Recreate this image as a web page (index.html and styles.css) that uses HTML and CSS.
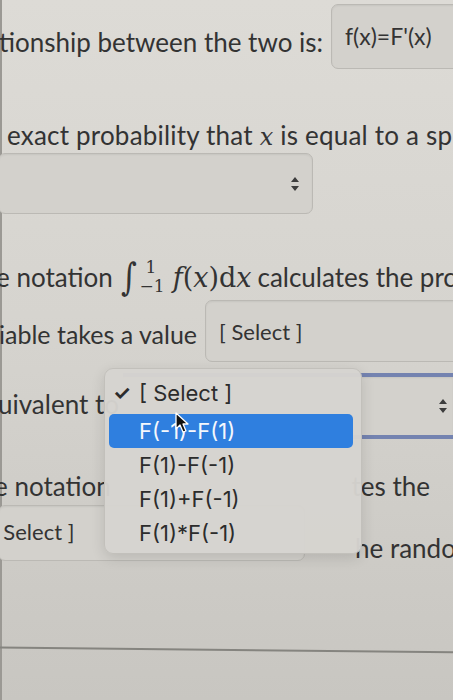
FILE: index.html
```html
<!DOCTYPE html>
<html lang="en">
  <head>
    <meta charset="UTF-8" />
    <meta name="viewport" content="width=device-width, initial-scale=1.0" />
    <title>Quiz</title>
    <link rel="stylesheet" href="styles.css">
  </head>
  <body>
    <div class="page">
      <div class="row row1">
        <span class="txt t1">tionship between the two is:</span>
        <div class="box box1"><span class="val">f(x)=F'(x)</span></div>
      </div>

      <div class="txt t2">exact probability that <i class="mx">x</i> is equal to a sp</div>
      <div class="box box2">
        <svg class="arrows" width="10" height="16" viewBox="0 0 10 16"><path d="M5 1 L9 6 L1 6 Z M1 10 L9 10 L5 15 Z" fill="#3d3d3d"/></svg>
      </div>

      <div class="txt t3">e notation
        <span class="math"><span class="int">∫</span><span class="lims"><span class="up">1</span><span class="lo">−1</span></span><i>f</i>(<i>x</i>)d<i>x</i></span>
        calculates the prc</div>

      <div class="row row4">
        <span class="txt">iable takes a value</span>
        <div class="box box4"><span class="val">[ Select ]</span></div>
      </div>

      <div class="row row5">
        <span class="txt">uivalent to</span>
        <div class="box box5">
          <svg class="arrows" width="10" height="16" viewBox="0 0 10 16"><path d="M5 1 L9 6 L1 6 Z M1 10 L9 10 L5 15 Z" fill="#3d3d3d"/></svg>
        </div>
      </div>

      <div class="row row6">
        <span class="txt">e notation</span>
        <span class="txt">tes the</span>
      </div>

      <div class="row row7">
        <div class="box box7"><span class="val">[ Select ]</span></div>
        <span class="txt">he random</span>
      </div>

      <div class="edge"></div>
    </div>

    <ul class="menu">
      <li class="opt first"><span class="chk">✓</span>[ Select ]</li>
      <li class="opt cur">F(-1)-F(1)</li>
      <li class="opt">F(1)-F(-1)</li>
      <li class="opt">F(1)+F(-1)</li>
      <li class="opt">F(1)*F(-1)</li>
    </ul>

    <svg class="cursor" width="16" height="22" viewBox="0 0 16 22">
      <path d="M1 1 L1 17 L5 13 L8 20 L11 19 L8 12 L13 12 Z" fill="#111" stroke="#fff" stroke-width="1.3" stroke-linejoin="round"/>
    </svg>
  </body>
</html>
```

FILE: styles.css
```css
* {
  padding: 0;
  margin: 0;
  box-sizing: border-box;
}
body {
  width: 453px;
  height: 700px;
  overflow: hidden;
  position: relative;
  font-family: Lato, "Noto Sans", sans-serif;
  color: #333;
  background: linear-gradient(#dddbd6, #d6d4cf 45%, #c8c6c1 100%);
  box-shadow: inset 2px 0 0 #9b9994;
}
li {
  list-style: none;
}
.page {
  display: flex;
  flex-direction: column;
  white-space: nowrap;
}
.txt {
  font-size: 26px;
  white-space: nowrap;
}
.row {
  display: flex;
  align-items: center;
}
.box {
  background: #d3d1cc;
  border: 1px solid #bbb9b4;
  border-radius: 7px;
  box-shadow: inset 0 1px 2px rgba(0, 0, 0, 0.06);
  display: flex;
  align-items: center;
  flex-shrink: 0;
}
.val {
  font-size: 22px;
  color: #333;
}
.arrows {
  display: block;
}

/* row 1 */
.row1 {
  margin-top: 3px;
  height: 66px;
}
.t1 {
  margin-left: -1px;
  padding-top: 12px;
}
.box1 {
  margin-left: 8px;
  width: 140px;
  height: 65px;
  padding: 0 0 0 13px;
}
.box1 .val {
  font-size: 23px;
}

/* row 2 */
.t2 {
  margin-top: 50px;
  margin-left: 7px;
  height: 32px;
  line-height: 32px;
  letter-spacing: 0.2px;
}
.mx {
  font-family: "DejaVu Serif", serif;
  font-size: 24px;
}
.box2 {
  margin-top: 2px;
  margin-left: -2px;
  width: 315px;
  height: 61px;
  justify-content: flex-end;
  padding-right: 12px;
}

/* row 3 math */
.t3 {
  margin-top: 40px;
  margin-left: -4px;
  height: 46px;
  display: flex;
  align-items: center;
  gap: 6px;
}
.math {
  display: inline-flex;
  align-items: center;
  font-family: "DejaVu Serif", serif;
  font-size: 27px;
}
.int {
  font-size: 38px;
  font-style: italic;
  transform: scaleX(0.8);
}
.lims {
  display: inline-flex;
  flex-direction: column;
  font-size: 17px;
  line-height: 19px;
  margin: 0 8px 0 1px;
}
.up {
  margin-left: 6px;
}

/* row 4 */
.row4 {
  height: 62px;
}
.row4 .txt {
  font-size: 25px;
  margin-left: -1px;
  padding-top: 6px;
}
.box4 {
  margin-left: 8px;
  width: 260px;
  height: 62px;
  padding: 0 0 0 13px;
}

/* row 5 (focused select behind menu) */
.row5 {
  margin-top: 11px;
  height: 66px;
}
.row5 .txt {
  margin-left: -2px;
  padding-bottom: 4px;
}
.box5 {
  margin-left: 4px;
  flex: 1 1 auto;
  height: 66px;
  border: 0;
  border-top: 4px solid #7483b0;
  border-bottom: 4px solid #7483b0;
  border-radius: 0;
  justify-content: flex-end;
  padding-right: 5px;
}

/* row 6, 7 */
.row6 {
  margin-top: 32px;
  height: 30px;
  justify-content: space-between;
}
.row6 .txt {
  margin-left: -6px;
}
.row6 .txt + .txt {
  margin-right: 23px;
}
.row7 {
  margin-top: 4px;
  height: 56px;
  align-items: flex-start;
}
.box7 {
  margin-left: -2px;
  width: 307px;
  height: 56px;
  padding: 0 0 4px 0;
}
.box7 .val {
  margin-left: -8px;
}
.row7 .txt {
  margin-left: 50px;
  padding-top: 27px;
}

.edge {
  margin-top: 88px;
  height: 0;
  border-top: 2px solid #85847f;
  transform: rotate(0.6deg);
  width: 470px;
  margin-left: -8px;
}

/* open dropdown */
.menu {
  position: absolute;
  left: 104px;
  top: 368px;
  width: 258px;
  height: 186px;
  padding: 7px 8px 4px 4px;
  background: rgba(214, 212, 207, 0.97);
  border: 1px solid #c2c0bb;
  border-radius: 9px;
  box-shadow: 0 4px 14px rgba(0, 0, 0, 0.12);
  font-family: Inter, "Noto Sans", sans-serif;
  font-size: 22px;
  color: #2c2c2c;
}
.opt {
  position: relative;
  height: 34px;
  line-height: 34px;
  padding-left: 30px;
  border-radius: 5px;
}
.opt.first {
  margin-bottom: 4px;
}
.opt.cur {
  background: #2f7fdf;
  color: #f4f7fc;
}
.chk {
  position: absolute;
  left: 4px;
  top: 0;
  width: 22px;
  font-size: 20px;
  font-weight: 700;
}
.cursor {
  position: absolute;
  left: 175px;
  top: 412px;
}
```
